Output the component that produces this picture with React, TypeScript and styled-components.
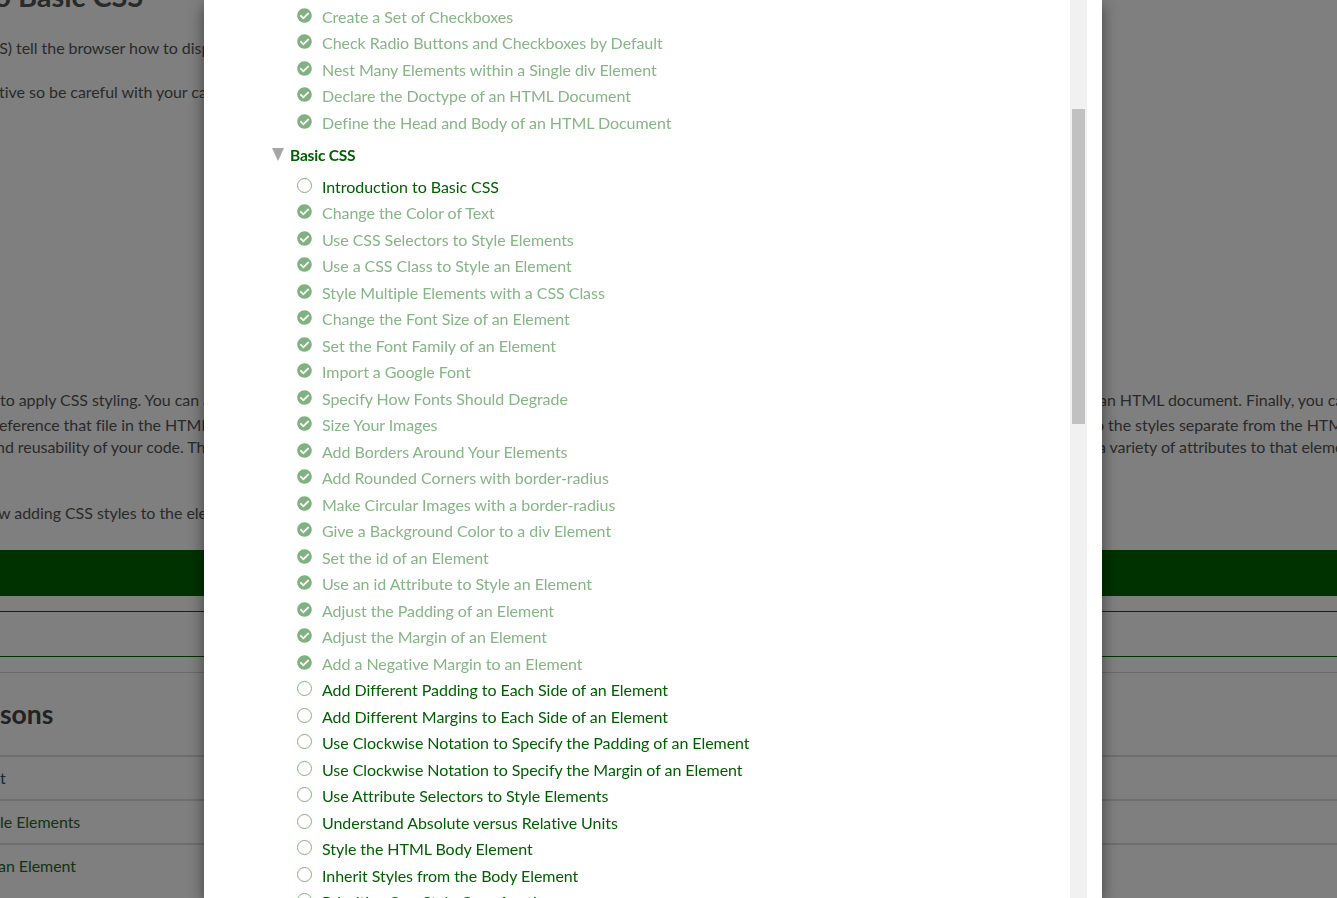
import styled, { createGlobalStyle } from 'styled-components'
import { FaCheckCircle } from 'react-icons/fa'

const doneTop = [
  'Create a Set of Checkboxes',
  'Check Radio Buttons and Checkboxes by Default',
  'Nest Many Elements within a Single div Element',
  'Declare the Doctype of an HTML Document',
  'Define the Head and Body of an HTML Document',
]

const cssLessons = [
  { title: 'Introduction to Basic CSS', done: false },
  { title: 'Change the Color of Text', done: true },
  { title: 'Use CSS Selectors to Style Elements', done: true },
  { title: 'Use a CSS Class to Style an Element', done: true },
  { title: 'Style Multiple Elements with a CSS Class', done: true },
  { title: 'Change the Font Size of an Element', done: true },
  { title: 'Set the Font Family of an Element', done: true },
  { title: 'Import a Google Font', done: true },
  { title: 'Specify How Fonts Should Degrade', done: true },
  { title: 'Size Your Images', done: true },
  { title: 'Add Borders Around Your Elements', done: true },
  { title: 'Add Rounded Corners with border-radius', done: true },
  { title: 'Make Circular Images with a border-radius', done: true },
  { title: 'Give a Background Color to a div Element', done: true },
  { title: 'Set the id of an Element', done: true },
  { title: 'Use an id Attribute to Style an Element', done: true },
  { title: 'Adjust the Padding of an Element', done: true },
  { title: 'Adjust the Margin of an Element', done: true },
  { title: 'Add a Negative Margin to an Element', done: true },
  { title: 'Add Different Padding to Each Side of an Element', done: false },
  { title: 'Add Different Margins to Each Side of an Element', done: false },
  { title: 'Use Clockwise Notation to Specify the Padding of an Element', done: false },
  { title: 'Use Clockwise Notation to Specify the Margin of an Element', done: false },
  { title: 'Use Attribute Selectors to Style Elements', done: false },
  { title: 'Understand Absolute versus Relative Units', done: false },
  { title: 'Style the HTML Body Element', done: false },
  { title: 'Inherit Styles from the Body Element', done: false },
  { title: 'Prioritize One Style Over Another', done: false },
]

function Lesson({ title, done }: { title: string; done: boolean }) {
  return (
    <LessonRow>
      <Mark>{done ? <FaCheckCircle size={15} /> : <Radio />}</Mark>
      <LessonName $done={done}>{title}</LessonName>
    </LessonRow>
  )
}

function App() {
  return (
    <>
      <GlobalStyle />
      <Page>
        <Title>Introduction to Basic CSS</Title>
        <Para>
          <Clipped $shift={-24}>(CSS) tell the browser how to display the text</Clipped>
        </Para>
        <Para>
          <Clipped $shift={-190}>Note that CSS is case-sensitive so be careful with your capitalization</Clipped>
        </Para>
        <Article>
          <SplitLine $height={25}>
            <Clipped $shift={0}>to apply CSS styling. You can add style</Clipped>
            <RightText $width={238}>an HTML document. Finally, you can</RightText>
          </SplitLine>
          <SplitLine $height={22}>
            <Clipped $shift={-1}>eference that file in the HTML document</Clipped>
            <RightText $width={242}>o the styles separate from the HTML</RightText>
          </SplitLine>
          <SplitLine $height={24}>
            <Clipped $shift={-4}>nd reusability of your code. The</Clipped>
            <RightText $width={239}>a variety of attributes to that element</RightText>
          </SplitLine>
          <LastLine>
            <Clipped $shift={-2}>w adding CSS styles to the elements</Clipped>
          </LastLine>
        </Article>
        <GreenBand />
        <Tabs />
        <LessonsHead>
          <LessonsTitle>sons</LessonsTitle>
        </LessonsHead>
        <PageRow $link>t</PageRow>
        <PageRow>le Elements</PageRow>
        <PageRow>
          <Clipped $shift={-2}>an Element</Clipped>
        </PageRow>
      </Page>
      <Overlay />
      <Modal>
        <ModalBody>
          {doneTop.map(title => (
            <Lesson key={title} title={title} done />
          ))}
          <Section>
            <Arrow />
            <SectionName>Basic CSS</SectionName>
          </Section>
          {cssLessons.map(e => (
            <Lesson key={e.title} title={e.title} done={e.done} />
          ))}
        </ModalBody>
        <Track>
          <Thumb />
        </Track>
      </Modal>
    </>
  )
}

const GlobalStyle = createGlobalStyle`
  html, body {
    margin: 0;
    height: 100%;
    overflow: hidden;
    background: #fff;
  }
  * {
    box-sizing: border-box;
  }
  body {
    font-family: Lato, 'Open Sans', sans-serif;
    font-size: 16px;
    font-variant-ligatures: none;
  }
`

const Page = styled.div`
  width: 1337px;
  height: 898px;
  overflow: hidden;
  color: #555;
  letter-spacing: -0.05px;
`

const Title = styled.h1`
  margin: -21px 0 23px -183px;
  height: 34px;
  font-size: 29px;
  line-height: 34px;
  font-weight: 700;
  white-space: nowrap;
`

const Para = styled.div`
  height: 44px;
  line-height: 24px;
  white-space: nowrap;
`

const Clipped = styled.span<{ $shift: number }>`
  display: inline-block;
  margin-left: ${({ $shift }) => $shift}px;
  white-space: nowrap;
`

const Article = styled.div`
  margin-top: 264px;
  line-height: 24px;
`

const SplitLine = styled.div<{ $height: number }>`
  display: flex;
  justify-content: space-between;
  height: ${({ $height }) => $height}px;
  white-space: nowrap;
`

const RightText = styled.span<{ $width: number }>`
  width: ${({ $width }) => $width}px;
  flex-shrink: 0;
`

const LastLine = styled.div`
  margin-top: 42px;
  height: 24px;
  white-space: nowrap;
`

const GreenBand = styled.div`
  margin-top: 25px;
  height: 46px;
  background: #006400;
`

const Tabs = styled.div`
  margin-top: 15px;
  height: 46px;
  border-top: 1px solid #006400;
  border-bottom: 1px solid #006400;
`

const LessonsHead = styled.div`
  margin-top: 15px;
  height: 83px;
  border-top: 1px solid #d4d4d4;
  display: flex;
  align-items: center;
`

const LessonsTitle = styled.h2`
  margin: 0;
  font-size: 26.5px;
  font-weight: 700;
  color: #444;
`

const PageRow = styled.div<{ $link?: boolean }>`
  height: 44px;
  line-height: 42px;
  border-top: 2px solid #dcdcdc;
  color: ${({ $link }) => ($link ? '#23527c' : '#2a662a')};
`

const Overlay = styled.div`
  position: fixed;
  inset: 0;
  background: rgba(0, 0, 0, 0.5);
`

const Modal = styled.div`
  position: fixed;
  top: 0;
  bottom: 0;
  left: 204px;
  width: 898px;
  background: #fff;
  box-shadow: 0 5px 15px rgba(0, 0, 0, 0.5);
  overflow: hidden;
`

const ModalBody = styled.div`
  padding: 3.75px 0 0 68px;
`

const LessonRow = styled.div`
  display: flex;
  height: 26.5px;
  line-height: 26.5px;
  padding-left: 25px;
`

const Mark = styled.span`
  width: 25px;
  flex-shrink: 0;
  display: flex;
  padding-top: 4px;
  color: #80b180;
`

const Radio = styled.span`
  display: block;
  width: 15px;
  height: 15px;
  border: 1px solid #80b180;
  border-radius: 50%;
`

const LessonName = styled.span<{ $done: boolean }>`
  color: ${({ $done }) => ($done ? '#86b586' : '#005f00')};
  white-space: nowrap;
  letter-spacing: -0.05px;
`

const Section = styled.div`
  display: flex;
  align-items: center;
  height: 32px;
  margin: 2.75px 0 2.5px;
`

const Arrow = styled.span`
  width: 0;
  height: 0;
  margin: -1px 6px 0 0;
  border-left: 6.5px solid transparent;
  border-right: 6.5px solid transparent;
  border-top: 13px solid #a6a6a6;
`

const SectionName = styled.span`
  font-weight: 700;
  font-size: 15.5px;
  letter-spacing: -0.2px;
  color: #005f00;
`

const Track = styled.div`
  position: absolute;
  top: 0;
  bottom: 0;
  left: 866px;
  width: 17px;
  background: #f1f1f1;
`

const Thumb = styled.div`
  margin: 109px 2px 0;
  height: 315px;
  background: #c1c1c1;
`

export default App
